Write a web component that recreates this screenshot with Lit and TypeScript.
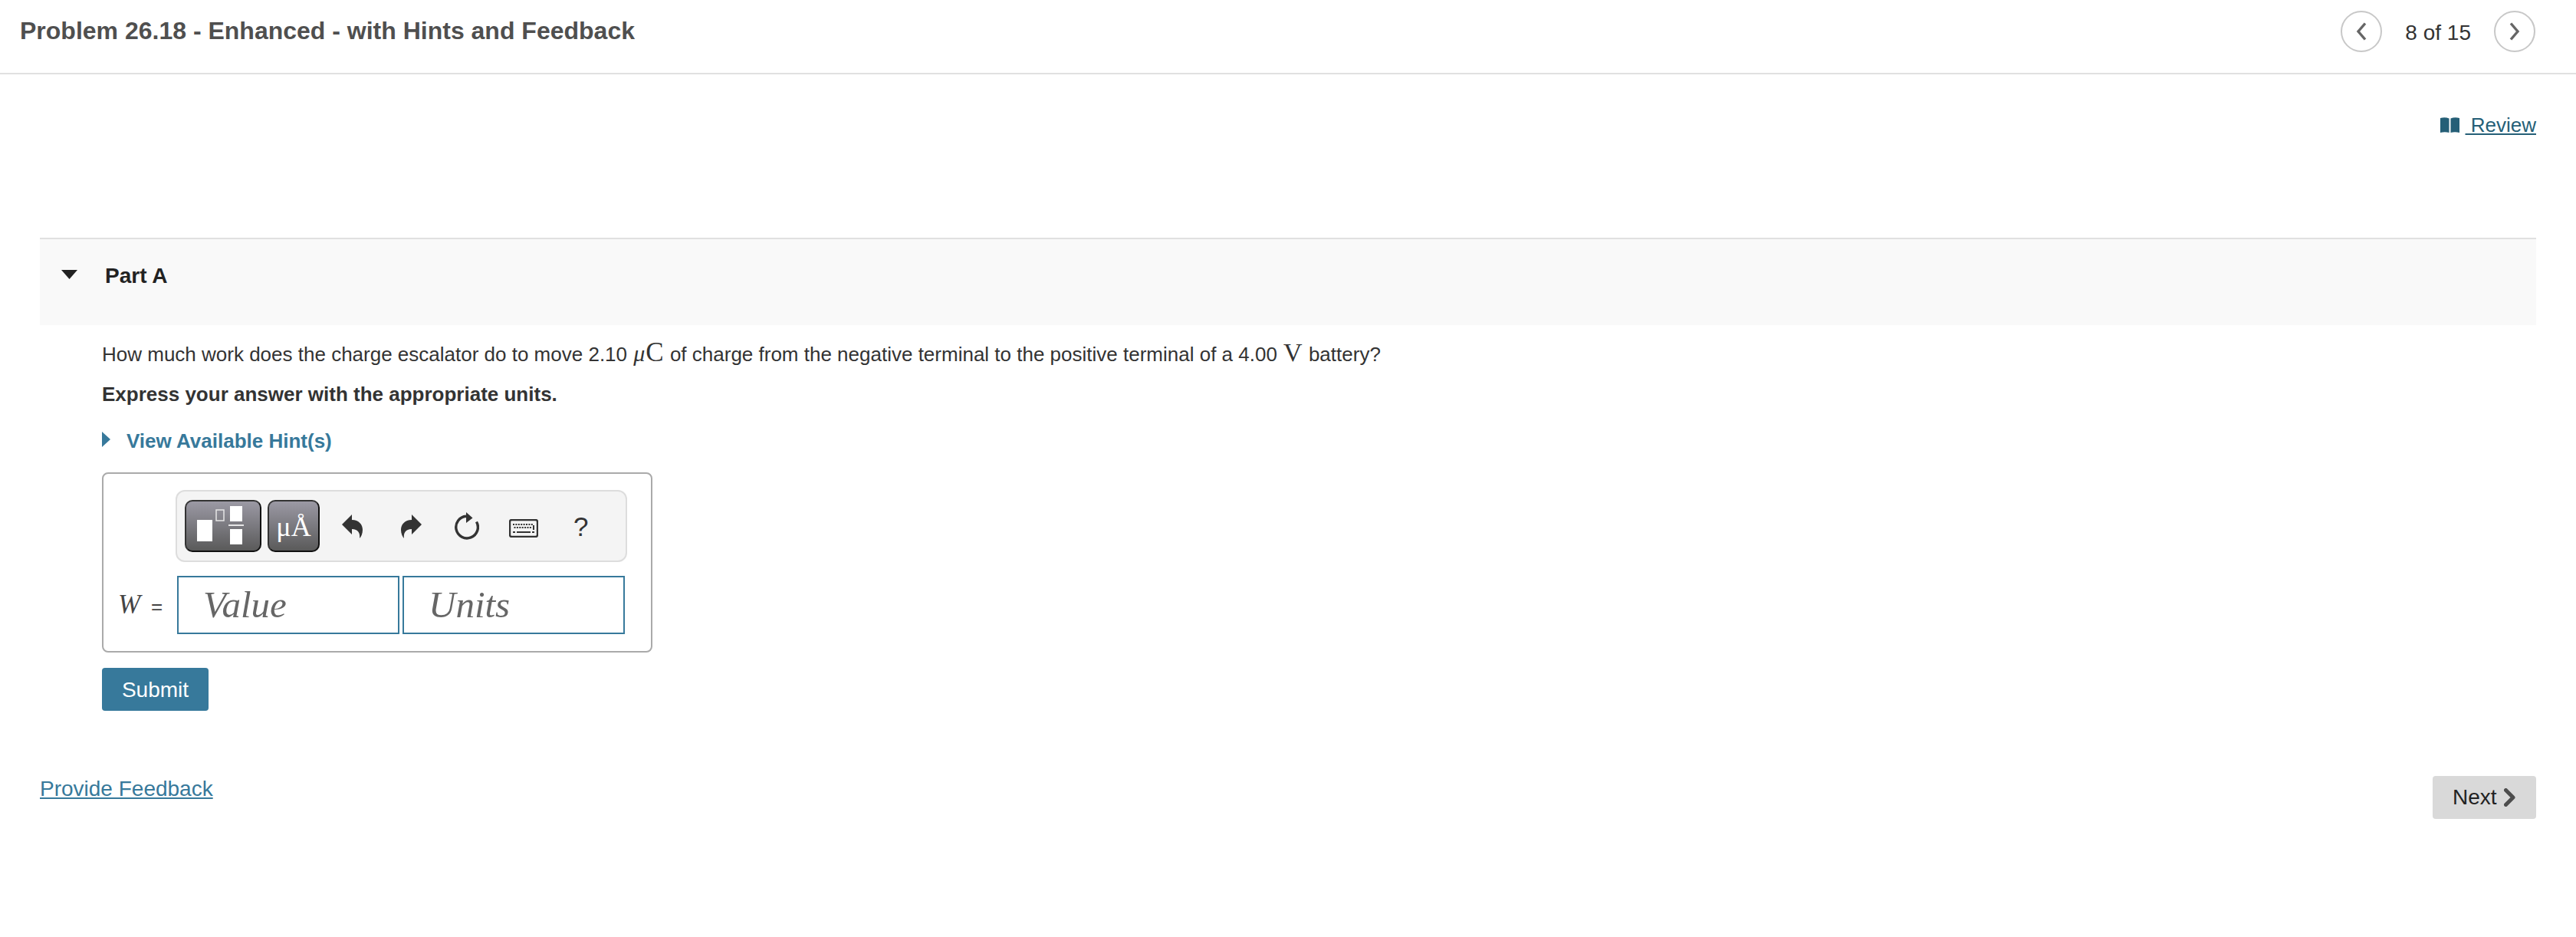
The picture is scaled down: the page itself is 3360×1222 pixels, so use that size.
import { LitElement, html, css, svg } from "lit";
import { customElement } from "lit/decorators.js";

const undoPath = "M0 13 L13 0 V7 C22 7 27 13 27 20 C27 25 25 29 23 31 C24 24 21 19 13 19 V26 Z";

const chevron = (d: string) => html`<svg width="14" height="24" viewBox="0 0 14 24">
  <path d="${d}" fill="none" stroke="currentColor" stroke-width="3.4" />
</svg>`;

// little dots on the keyboard glyph
const keyDots = () => {
  const out = [];
  for (let i = 0; i < 8; i++) out.push(svg`<rect x="${5 + i * 3.4}" y="6" width="2" height="2" />`);
  for (let i = 0; i < 7; i++) out.push(svg`<rect x="${6.5 + i * 3.4}" y="10" width="2" height="2" />`);
  out.push(svg`<rect x="31" y="8" width="2" height="6" />`);
  out.push(svg`<rect x="5" y="16" width="3" height="2" />`);
  out.push(svg`<rect x="10" y="16" width="18" height="2" />`);
  out.push(svg`<rect x="30" y="16" width="3" height="2" />`);
  return out;
};

@customElement("app-root")
export class AppRoot extends LitElement {
  static styles = css`
    :host {
      display: block;
      min-height: 1222px;
      background: #fff;
      font-family: "Liberation Sans", Arial, sans-serif;
      color: #333;
      font-size: 28px;
    }

    .topbar {
      display: flex;
      align-items: center;
      justify-content: space-between;
      height: 95px;
      padding: 0 53px 0 26px;
      border-bottom: 2px solid #e0e0e0;
    }
    .title {
      font-size: 32px;
      font-weight: bold;
      color: #4f4f4f;
      margin-top: -15px;
    }
    .pager {
      display: flex;
      align-items: center;
      gap: 30px;
      margin-top: -14px;
    }
    .round {
      display: flex;
      align-items: center;
      justify-content: center;
      width: 54px;
      height: 54px;
      box-sizing: border-box;
      border: 2px solid #c8c8c8;
      border-radius: 50%;
      color: #666;
    }
    .count {
      padding-top: 4px;
      color: #333;
    }

    .review-row {
      display: flex;
      justify-content: flex-end;
      padding: 50px 52px 0 0;
      height: 213px;
      box-sizing: border-box;
    }
    .review {
      display: flex;
      align-items: center;
      height: 32px;
      font-size: 26px;
      color: #255f77;
    }
    .review span {
      text-decoration: underline;
      white-space: pre;
      margin-left: 8px;
    }
    .sheet {
      padding: 0 52px;
    }
    .part-head {
      display: flex;
      align-items: center;
      height: 114px;
      box-sizing: border-box;
      background: #f9f9f9;
      border-top: 2px solid #e0e0e0;
      font-weight: bold;
      color: #222;
    }
    .part-head svg {
      margin: -20px 36px 0 28px;
    }
    .part-label {
      margin-top: -16px;
    }

    .part-body {
      padding: 19px 0 0 81px;
      font-size: 26px;
    }
    .question,
    .express {
      line-height: 38px;
    }
    .math {
      font-family: "Liberation Serif", "Times New Roman", serif;
      font-size: 34px;
      line-height: 0;
      margin: 0 1px;
    }
    .math.charge {
      font-size: 35px;
    }
    .math i {
      font-size: 30px;
      margin-right: 1px;
    }
    .express {
      margin-top: 14px;
      font-weight: bold;
    }
    .hints {
      display: flex;
      align-items: center;
      gap: 21px;
      margin-top: 25px;
      height: 34px;
      font-weight: bold;
      color: #37799b;
    }
    .hints svg {
      margin-top: -5px;
    }

    .answer {
      box-sizing: border-box;
      width: 718px;
      height: 235px;
      margin-top: 24px;
      padding: 21px 0 0 94px;
      border: 2px solid #aaa;
      border-radius: 8px;
    }
    .tools {
      box-sizing: border-box;
      display: flex;
      align-items: center;
      width: 589px;
      height: 94px;
      padding-left: 10px;
      background: #f4f4f4;
      border: 2px solid #ddd;
      border-radius: 12px;
    }
    .tmpl {
      box-sizing: border-box;
      width: 100px;
      height: 68px;
      margin-right: 8px;
      background: linear-gradient(#9b99a4, #5a5a5a);
      border: 2px solid #111;
      border-top-color: #333;
      border-left-color: #333;
      border-radius: 10px;
      display: flex;
    }
    .tmpl.unit {
      width: 68px;
      margin-right: 29px;
      justify-content: center;
      color: #fff;
      font-family: "Liberation Serif", serif;
      font-size: 36px;
      line-height: 66px;
    }
    .tool-icon {
      fill: #333;
      flex: none;
    }
    .help {
      margin-left: 46px;
      font-size: 35px;
      line-height: 1;
      color: #333;
    }

    .entry {
      display: flex;
      align-items: center;
      margin: 18px 0 0 -75px;
    }
    .var {
      width: 77px;
      box-sizing: border-box;
      font-family: "Liberation Serif", serif;
      font-size: 35px;
      color: #444;
      white-space: pre;
    }
    .var small {
      font-family: "Liberation Sans", sans-serif;
      font-size: 26px;
      margin-left: 5px;
    }
    .field {
      box-sizing: border-box;
      width: 290px;
      height: 76px;
      margin-right: 4px;
      padding-left: 32px;
      border: 2px solid #37799b;
      font-family: "Liberation Serif", serif;
      font-style: italic;
      font-size: 49px;
      line-height: 72px;
      color: #666;
    }

    .submit {
      box-sizing: border-box;
      display: flex;
      align-items: center;
      justify-content: center;
      width: 139px;
      height: 56px;
      margin-top: 20px;
      padding-top: 2px;
      background: #37799b;
      border-radius: 4px;
      color: #fff;
      font-size: 28px;
    }

    .foot {
      display: flex;
      justify-content: space-between;
      margin-top: 85px;
    }
    .feedback {
      color: #37799b;
      text-decoration: underline;
      line-height: 34px;
    }
    .next {
      box-sizing: border-box;
      display: flex;
      align-items: center;
      gap: 9px;
      width: 135px;
      height: 56px;
      padding-left: 26px;
      background: #d9d9d9;
      border-radius: 4px;
      color: #222;
    }
    .next svg {
      color: #4d4d4d;
    }
  `;

  render() {
    return html`
      <div class="topbar">
        <div class="title">Problem 26.18 - Enhanced - with Hints and Feedback</div>
        <div class="pager">
          <div class="round">${chevron("M12 1.5 L3 12 L12 22.5")}</div>
          <div class="count">8 of 15</div>
          <div class="round">${chevron("M2 1.5 L11 12 L2 22.5")}</div>
        </div>
      </div>
      <div class="review-row">
        <div class="review">
          <svg width="25" height="21" viewBox="0 0 25 21" fill="#255f77">
            <path d="M0 1 C4 0 8 0 11.5 1.5 V20 C8 19 4 19 0 20 Z" />
            <path d="M25 1 C21 0 17 0 13.5 1.5 V20 C17 19 21 19 25 20 Z" />
          </svg>
          <span> Review</span>
        </div>
      </div>
      <div class="sheet">
        <div class="part-head">
          <svg width="21" height="12" viewBox="0 0 21 12" fill="#222"><path d="M0 0 H21 L10.5 12 Z" /></svg>
          <div class="part-label">Part A</div>
        </div>
        <div class="part-body">
          <div class="question">
            How much work does the charge escalator do to move 2.10
            <span class="math charge"><i>μ</i>C</span> of charge from the negative terminal to the positive
            terminal of a 4.00 <span class="math">V</span> battery?
          </div>
          <div class="express">Express your answer with the appropriate units.</div>
          <div class="hints">
            <svg width="11" height="20" viewBox="0 0 11 20" fill="#37799b"><path d="M0 0 L11 10 L0 20 Z" /></svg>
            <span>View Available Hint(s)</span>
          </div>
          <div class="answer">
            <div class="tools">
              <div class="tmpl">
                <svg width="96" height="64" viewBox="2 2 96 64" fill="#fff">
                  <rect x="16" y="26" width="20" height="28" />
                  <rect x="41" y="13" width="10" height="14" fill="none" stroke="#e6e6e6" stroke-width="1.5" />
                  <rect x="59" y="8" width="16" height="20" />
                  <rect x="57" y="32" width="20" height="2" fill="#e6e6e6" />
                  <rect x="59" y="38" width="16" height="20" />
                </svg>
              </div>
              <div class="tmpl unit">μÅ</div>
              <svg class="tool-icon" width="27" height="31" viewBox="0 0 27 31"><path d="${undoPath}" /></svg>
              <svg class="tool-icon" style="margin-left:50px" width="27" height="31" viewBox="0 0 27 31">
                <path d="${undoPath}" transform="matrix(-1 0 0 1 27 0)" />
              </svg>
              <svg class="tool-icon" style="margin-left:43px" width="32" height="36" viewBox="0 0 32 36">
                <path d="M15 5.3 A14.3 14.3 0 1 0 28.5 12.5" fill="none" stroke="#333" stroke-width="3.4" />
                <path d="M15 0 L23.5 7.5 L15 14 Z" />
              </svg>
              <svg class="tool-icon" style="margin-left:39px;margin-top:6px" width="38" height="24" viewBox="0 0 38 24">
                <rect x="1" y="1" width="36" height="22" rx="2.5" fill="none" stroke="#333" stroke-width="2.4" />
                ${keyDots()}
              </svg>
              <div class="help">?</div>
            </div>
            <div class="entry">
              <div class="var"><i>W</i> <small>=</small></div>
              <div class="field">Value</div>
              <div class="field">Units</div>
            </div>
          </div>
          <div class="submit">Submit</div>
        </div>
        <div class="foot">
          <div class="feedback">Provide Feedback</div>
          <div class="next">
            <span>Next</span>
            <svg width="15" height="24" viewBox="0 0 15 24"><path d="M2.5 2.5 L12 12 L2.5 21.5" fill="none" stroke="currentColor" stroke-width="5" stroke-linecap="round" stroke-linejoin="round" /></svg>
          </div>
        </div>
      </div>
    `;
  }
}
